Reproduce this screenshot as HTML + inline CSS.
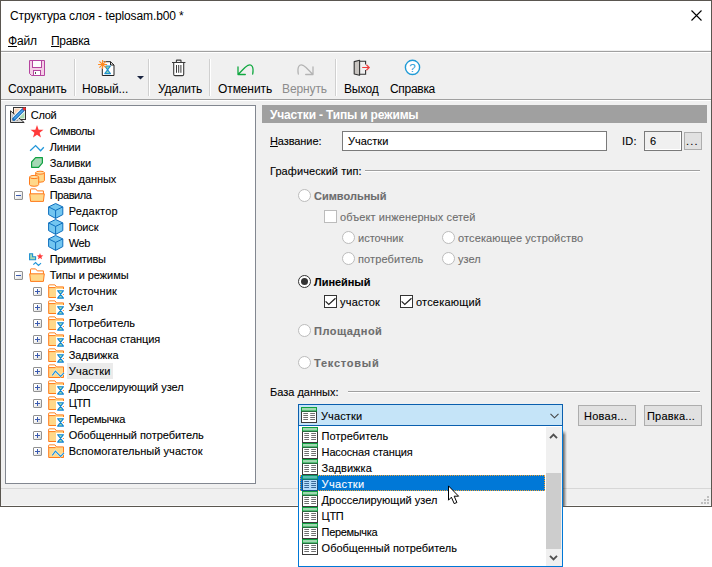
<!DOCTYPE html>
<html lang="ru">
<head>
<meta charset="utf-8">
<title>Структура слоя - teplosam.b00 *</title>
<style>
html,body{margin:0;padding:0;}
body{width:712px;height:567px;position:relative;overflow:hidden;background:#fff;font-family:"Liberation Sans",sans-serif;font-size:11px;color:#000;}
*{box-sizing:border-box;}
#win,#win div,#win svg,#win span.a{position:absolute;}
#win{left:0;top:0;width:712px;height:507px;background:#f0f0f0;}
.t{white-space:nowrap;line-height:14px;height:14px;font-size:11px;-webkit-text-stroke:0.1px currentColor;}
.ui{font-size:12px;line-height:16px;height:16px;white-space:nowrap;}
.b{font-weight:bold;}
.dis{color:#6d6d6d;}
u{text-decoration:underline;text-underline-offset:1px;}
svg{overflow:visible;}
.sep{width:1px;height:37px;top:59px;background:#d0d0d0;}
.sep:after{content:"";position:absolute;left:1px;top:0;width:1px;height:37px;background:#fff;}
.radio{width:13px;height:13px;border-radius:50%;border:1px solid #333;background:#fff;}
.radio.d{border-color:#bcbcbc;}
.radio.on:after{content:"";position:absolute;left:2px;top:2px;width:7px;height:7px;border-radius:50%;background:#333;}
.cb{width:13px;height:13px;border:1px solid #333;background:#fff;}
.cb.d{border-color:#bcbcbc;}
.btn{background:#e1e1e1;border:1px solid #adadad;}
.gl{height:1px;background:#a0a0a0;}
.ex{width:9px;height:9px;border:1px solid #919191;border-radius:1px;background:linear-gradient(135deg,#fff 30%,#d8d8d8);}
.ex:before{content:"";position:absolute;left:1px;top:3px;width:5px;height:1px;background:#3a5ab0;}
.ex.p:after{content:"";position:absolute;left:3px;top:1px;width:1px;height:5px;background:#3a5ab0;}
</style>
</head>
<body>

<div id="win">
  <!-- title bar + menu -->
  <div id="titlebar" style="left:1px;top:1px;width:710px;height:49px;background:#fff;"></div>
  <div id="title" class="ui" style="left:10px;top:8px;letter-spacing:-0.12px;">Структура слоя - teplosam.b00 *</div>
  <svg id="closex" style="left:691px;top:10px;" width="11" height="11" viewBox="0 0 11 11"><path d="M0.5 0.5 L10.5 10.5 M10.5 0.5 L0.5 10.5" stroke="#000" stroke-width="1.1" fill="none"/></svg>
  <div id="m1" class="ui" style="left:8px;top:33px;letter-spacing:-0.2px;"><u>Ф</u>айл</div>
  <div id="m2" class="ui" style="left:51px;top:33px;letter-spacing:-0.3px;"><u>П</u>равка</div>
  <div style="left:1px;top:51px;width:710px;height:1px;background:#a0a0a0;"></div>
  <div style="left:1px;top:52px;width:710px;height:1px;background:#fff;"></div>
  <!-- toolbar -->
  <div style="left:1px;top:99px;width:710px;height:1px;background:#a0a0a0;"></div>
  <div style="left:1px;top:100px;width:710px;height:1px;background:#fff;"></div>
  <div class="sep" style="left:74px;"></div>
  <div class="sep" style="left:148px;"></div>
  <div class="sep" style="left:209px;"></div>
  <div class="sep" style="left:335px;"></div>
  <div id="tb1" class="ui" style="left:8px;top:81px;letter-spacing:-0.1px;">Сохранить</div>
  <div id="tb2" class="ui" style="left:82px;top:81px;letter-spacing:-0.1px;">Новый...</div>
  <div id="tb3" class="ui" style="left:158px;top:81px;letter-spacing:-0.25px;">Удалить</div>
  <div id="tb4" class="ui" style="left:218px;top:81px;letter-spacing:-0.1px;">Отменить</div>
  <div id="tb5" class="ui" style="left:282px;top:81px;letter-spacing:-0.1px;color:#8c8c8c;">Вернуть</div>
  <div id="tb6" class="ui" style="left:344px;top:81px;letter-spacing:-0.3px;">Выход</div>
  <div id="tb7" class="ui" style="left:390px;top:81px;letter-spacing:-0.3px;">Справка</div>
  
  <svg style="left:29px;top:60px;" width="16" height="16" viewBox="0 0 16 16">
    <path d="M0.5 0.5 H15.5 V15.5 H2.5 L0.5 13.5 Z" fill="#f4cfe6" stroke="#b5449f" stroke-width="1"/>
    <rect x="3.5" y="0.5" width="9" height="7" fill="#fcfcfc" stroke="#b5449f" stroke-width="1"/>
    <rect x="4.5" y="10.5" width="7" height="5" fill="#fff" stroke="#b5449f" stroke-width="1"/>
    <rect x="6" y="12" width="1" height="2" fill="#555"/>
  </svg>
  <svg style="left:98px;top:58px;" width="18" height="19" viewBox="0 0 18 19">
    <path d="M4.3 3.7 H12.5 L16 7 V17.5 H4.3 Z" fill="#fff" stroke="#222" stroke-width="1"/>
    <path d="M12.5 3.7 V7 H16" fill="none" stroke="#222" stroke-width="1"/>
    <path d="M6.8 8 H12.4 L6.8 15.6 H12.4 Z" fill="#90d6a8" stroke="#1e90d0" stroke-width="1.2" stroke-linejoin="round"/>
    <circle cx="4.6" cy="6.5" r="3.2" fill="#f0f0f0"/>
    <path d="M4.6 2 V11 M0.1 6.5 H9.1 M1.4 3.3 L7.8 9.7 M7.8 3.3 L1.4 9.7" stroke="#ff8a20" stroke-width="1.1"/>
  </svg>
  <svg style="left:137px;top:76px;" width="7" height="4" viewBox="0 0 7 4"><path d="M0 0 H7 L3.5 3.6 Z" fill="#1a2440"/></svg>
  <svg style="left:171px;top:59px;" width="16" height="18" viewBox="0 0 16 18">
    <path d="M2.7 3.5 V15.2 Q2.7 16.6 4.1 16.6 H11.3 Q12.7 16.6 12.7 15.2 V3.5" fill="#fff" stroke="#3a3a3a" stroke-width="1.1"/>
    <path d="M1 3.5 H14.4 M5.4 3.4 V1.6 Q5.4 1.1 5.9 1.1 H9.5 Q10 1.1 10 1.6 V3.4" fill="none" stroke="#3a3a3a" stroke-width="1.1"/>
    <path d="M5.5 6 V13.8 M7.7 6 V13.8 M9.9 6 V13.8" stroke="#3a3a3a" stroke-width="1"/>
  </svg>
  <svg style="left:236.5px;top:63px;" width="18" height="13" viewBox="0 0 18 13">
    <path d="M1 4 V11.5 H8.3 M1.2 11.3 C5 8 7 4.5 11 2.3 C14.5 0.8 17 3.5 15.7 11" fill="none" stroke="#10a840" stroke-width="1.3" stroke-linecap="round" stroke-linejoin="round"/>
  </svg>
  <svg style="left:295.5px;top:63px;" width="18" height="13" viewBox="0 0 18 13">
    <path d="M17 4 V11.5 H9.7 M16.8 11.3 C13 8 11 4.5 7 2.3 C3.5 0.8 1 3.5 2.3 11" fill="none" stroke="#b4b4b4" stroke-width="1.3" stroke-linecap="round" stroke-linejoin="round"/>
  </svg>
  <svg style="left:353px;top:59px;" width="18" height="17" viewBox="0 0 18 17">
    <path d="M6.8 2.3 H12.6 V5.6 M12.6 11 V15.3 H6.8" fill="none" stroke="#333" stroke-width="1.1"/>
    <path d="M1.2 2.6 L6.6 1.3 V16.3 L1.2 15 Z" fill="#c8c4c0" stroke="#333" stroke-width="1.1" stroke-linejoin="round"/>
    <path d="M9.2 8.5 H16 M13.4 5.8 L16.2 8.5 L13.4 11.2" fill="none" stroke="#f03c3c" stroke-width="1.2"/>
  </svg>
  <svg style="left:404px;top:59px;" width="17" height="17" viewBox="0 0 17 17">
    <circle cx="8.5" cy="8.4" r="7.1" fill="#fff" stroke="#1e9ad6" stroke-width="1.4"/>
    <text x="8.5" y="12.6" text-anchor="middle" font-family="Liberation Sans, sans-serif" font-size="11.5" fill="#1e9ad6">?</text>
  </svg>

  <!-- tree panel -->
  <div id="tree" style="left:5px;top:105px;width:251px;height:379px;background:#fff;border:1px solid #828790;"></div>
  <svg style="left:10px;top:107px;" width="16" height="16" viewBox="0 0 16 16"><rect x="3.5" y="0.5" width="12" height="12" fill="#fff" stroke="#333" stroke-width="1"/><path d="M4.5 1.5 H12.5 L4.5 9.5 Z" fill="#f8d2b4"/><path d="M14.5 4 V11.5 H7 Z" fill="#a9dab3"/><path d="M0.5 3.8 V15.5 H14.2 Z" fill="#d4d4d4" fill-opacity="0.9" stroke="#333" stroke-width="1" stroke-linejoin="round"/><path d="M2.6 9 V13.4 H7.6 Z" fill="#f4f4f4" stroke="#555" stroke-width="0.6"/><path d="M3.9 12 L13.3 2.6" stroke="#fff" stroke-width="5.4" stroke-linecap="butt"/><path d="M4 12 L13.2 2.8" stroke="#1b6fc0" stroke-width="3.6" stroke-linecap="round"/><path d="M4.2 11.8 L12.8 3.2" stroke="#4fa8ea" stroke-width="1.5"/><circle cx="14.3" cy="1.8" r="1.6" fill="#f03030"/></svg>
  <div class="t tr" id="tr0" style="left:30.7px;top:108px;letter-spacing:-0.233px;">Слой</div>
  <svg style="left:29px;top:123px;" width="16" height="16" viewBox="0 0 16 16"><polygon points="8.00,2.10 9.62,6.68 14.47,6.80 10.62,9.75 12.00,14.40 8.00,11.65 4.00,14.40 5.38,9.75 1.53,6.80 6.38,6.68" fill="#ff3b3b"/></svg>
  <div class="t tr" id="tr1" style="left:49.7px;top:124px;letter-spacing:-0.400px;">Символы</div>
  <svg style="left:29px;top:139px;" width="16" height="16" viewBox="0 0 16 16"><polyline points="1.1,11.7 6.6,6.6 11.6,11.7 14.8,8.3" fill="none" stroke="#2196d9" stroke-width="1.3"/></svg>
  <div class="t tr" id="tr2" style="left:49.7px;top:140px;letter-spacing:-0.175px;">Линии</div>
  <svg style="left:29px;top:155px;" width="16" height="16" viewBox="0 0 16 16"><polygon points="2.6,7 6.6,2.7 13.4,2.7 13.4,7.8 9.6,12.3 2.6,12.3" fill="#a5d8b5" stroke="#10a040" stroke-width="1.2" stroke-linejoin="round"/></svg>
  <div class="t tr" id="tr3" style="left:49.7px;top:156px;letter-spacing:-0.117px;">Заливки</div>
  <svg style="left:29px;top:171px;" width="16" height="16" viewBox="0 0 16 16"><path d="M6.7 1.7 V9.5 A4.35 1.7 0 0 0 15.4 9.5 V1.7" fill="#ffd88a" stroke="#ff7a1a" stroke-width="1"/><ellipse cx="11.05" cy="1.7" rx="4.35" ry="1.5" fill="#ffe2a8" stroke="#ff7a1a" stroke-width="1"/><path d="M0.5 6 V13.5 A4.6 1.8 0 0 0 9.7 13.5 V6" fill="#ffd88a" stroke="#ff7a1a" stroke-width="1"/><ellipse cx="5.1" cy="6" rx="4.6" ry="1.6" fill="#ffe2a8" stroke="#ff7a1a" stroke-width="1"/></svg>
  <div class="t tr" id="tr4" style="left:49.7px;top:172px;letter-spacing:-0.070px;">Базы данных</div>
  <div class="ex" style="left:14px;top:191px;"></div>
  <svg style="left:29px;top:187px;" width="16" height="16" viewBox="0 0 16 16"><path d="M1.5 7 V2.4 Q1.5 1.9 2 1.9 H6.6 L8.3 3.9 H14.4 V7" fill="#fff" stroke="#ff7a1a" stroke-width="1"/><path d="M0.7 6.8 H15.3 L14.4 14.4 H1.6 Z" fill="#ffd88a" stroke="#ff7a1a" stroke-width="1" stroke-linejoin="round"/></svg>
  <div class="t tr" id="tr5" style="left:49.7px;top:188px;letter-spacing:-0.400px;">Правила</div>
  <svg style="left:48px;top:203px;" width="16" height="16" viewBox="0 0 16 16"><polygon points="7.6,0.5 14.8,3.9 14.8,11.6 7.6,15.4 0.6,11.6 0.6,3.9" fill="#73c6f0" stroke="#0d6ebd" stroke-width="1" stroke-linejoin="round"/><path d="M0.6 3.9 L7.6 7.4 L14.8 3.9 M7.6 7.4 V15.4" fill="none" stroke="#0d6ebd" stroke-width="1"/></svg>
  <div class="t tr" id="tr6" style="left:68.7px;top:204px;letter-spacing:0.243px;">Редактор</div>
  <svg style="left:48px;top:219px;" width="16" height="16" viewBox="0 0 16 16"><polygon points="7.6,0.5 14.8,3.9 14.8,11.6 7.6,15.4 0.6,11.6 0.6,3.9" fill="#73c6f0" stroke="#0d6ebd" stroke-width="1" stroke-linejoin="round"/><path d="M0.6 3.9 L7.6 7.4 L14.8 3.9 M7.6 7.4 V15.4" fill="none" stroke="#0d6ebd" stroke-width="1"/></svg>
  <div class="t tr" id="tr7" style="left:68.7px;top:220px;letter-spacing:-0.175px;">Поиск</div>
  <svg style="left:48px;top:235px;" width="16" height="16" viewBox="0 0 16 16"><polygon points="7.6,0.5 14.8,3.9 14.8,11.6 7.6,15.4 0.6,11.6 0.6,3.9" fill="#73c6f0" stroke="#0d6ebd" stroke-width="1" stroke-linejoin="round"/><path d="M0.6 3.9 L7.6 7.4 L14.8 3.9 M7.6 7.4 V15.4" fill="none" stroke="#0d6ebd" stroke-width="1"/></svg>
  <div class="t tr" id="tr8" style="left:68.7px;top:236px;letter-spacing:-0.350px;">Web</div>
  <svg style="left:29px;top:251px;" width="16" height="16" viewBox="0 -2.1 16 16"><path d="M0.6 0.7 H3.6 V3.6 H6.6 V6.6 H0.6 Z" fill="#a5d8b5" stroke="#1e90d0" stroke-width="1.1"/><polygon points="11.00,-0.10 11.85,2.23 14.33,2.32 12.38,3.85 13.06,6.23 11.00,4.85 8.94,6.23 9.62,3.85 7.67,2.32 10.15,2.23" fill="#ff3b3b"/><polyline points="4.3,11.6 6.6,9.4 9.5,12.4 12,10" fill="none" stroke="#2196d9" stroke-width="1.1"/></svg>
  <div class="t tr" id="tr9" style="left:49.7px;top:252px;letter-spacing:-0.338px;">Примитивы</div>
  <div class="ex" style="left:14px;top:271px;"></div>
  <svg style="left:29px;top:267px;" width="16" height="16" viewBox="0 0 16 16"><path d="M1.5 7 V2.4 Q1.5 1.9 2 1.9 H6.6 L8.3 3.9 H14.4 V7" fill="#fff" stroke="#ff7a1a" stroke-width="1"/><path d="M0.7 6.8 H15.3 L14.4 14.4 H1.6 Z" fill="#ffd88a" stroke="#ff7a1a" stroke-width="1" stroke-linejoin="round"/></svg>
  <div class="t tr" id="tr10" style="left:49.7px;top:268px;letter-spacing:-0.058px;">Типы и режимы</div>
  <div class="ex p" style="left:33px;top:287px;"></div>
  <svg style="left:48px;top:283px;" width="16" height="16" viewBox="0 0 16 16"><path d="M0.7 14.5 V2.4 Q0.7 1.9 1.2 1.9 H6.9 L8.6 3.9 H15.5 V14.5 Z" fill="#ffd88a" stroke="#ff7a1a" stroke-width="1"/><path d="M1.2 2.4 H6.7 L7.9 4.2 H1.2 Z" fill="#fff"/><path d="M0.7 4.6 H7.6" stroke="#ff7a1a" stroke-width="1"/><rect x="8" y="6" width="9" height="11" fill="#fff"/><circle cx="15.4" cy="11.5" r="0.6" fill="#ff7a1a"/><path d="M9.6 7.7 H15.5 L9.6 15.1 H15.5 Z" fill="#a8dfa4" stroke="#0f84d4" stroke-width="1.05" stroke-linejoin="round"/></svg>
  <div class="t tr" id="tr11" style="left:68.7px;top:284px;letter-spacing:0.171px;">Источник</div>
  <div class="ex p" style="left:33px;top:303px;"></div>
  <svg style="left:48px;top:299px;" width="16" height="16" viewBox="0 0 16 16"><path d="M0.7 14.5 V2.4 Q0.7 1.9 1.2 1.9 H6.9 L8.6 3.9 H15.5 V14.5 Z" fill="#ffd88a" stroke="#ff7a1a" stroke-width="1"/><path d="M1.2 2.4 H6.7 L7.9 4.2 H1.2 Z" fill="#fff"/><path d="M0.7 4.6 H7.6" stroke="#ff7a1a" stroke-width="1"/><rect x="8" y="6" width="9" height="11" fill="#fff"/><circle cx="15.4" cy="11.5" r="0.6" fill="#ff7a1a"/><path d="M9.6 7.7 H15.5 L9.6 15.1 H15.5 Z" fill="#a8dfa4" stroke="#0f84d4" stroke-width="1.05" stroke-linejoin="round"/></svg>
  <div class="t tr" id="tr12" style="left:68.7px;top:300px;letter-spacing:0.300px;">Узел</div>
  <div class="ex p" style="left:33px;top:319px;"></div>
  <svg style="left:48px;top:315px;" width="16" height="16" viewBox="0 0 16 16"><path d="M0.7 14.5 V2.4 Q0.7 1.9 1.2 1.9 H6.9 L8.6 3.9 H15.5 V14.5 Z" fill="#ffd88a" stroke="#ff7a1a" stroke-width="1"/><path d="M1.2 2.4 H6.7 L7.9 4.2 H1.2 Z" fill="#fff"/><path d="M0.7 4.6 H7.6" stroke="#ff7a1a" stroke-width="1"/><rect x="8" y="6" width="9" height="11" fill="#fff"/><circle cx="15.4" cy="11.5" r="0.6" fill="#ff7a1a"/><path d="M9.6 7.7 H15.5 L9.6 15.1 H15.5 Z" fill="#a8dfa4" stroke="#0f84d4" stroke-width="1.05" stroke-linejoin="round"/></svg>
  <div class="t tr" id="tr13" style="left:68.7px;top:316px;letter-spacing:0.020px;">Потребитель</div>
  <div class="ex p" style="left:33px;top:335px;"></div>
  <svg style="left:48px;top:331px;" width="16" height="16" viewBox="0 0 16 16"><path d="M0.7 14.5 V2.4 Q0.7 1.9 1.2 1.9 H6.9 L8.6 3.9 H15.5 V14.5 Z" fill="#ffd88a" stroke="#ff7a1a" stroke-width="1"/><path d="M1.2 2.4 H6.7 L7.9 4.2 H1.2 Z" fill="#fff"/><path d="M0.7 4.6 H7.6" stroke="#ff7a1a" stroke-width="1"/><rect x="8" y="6" width="9" height="11" fill="#fff"/><circle cx="15.4" cy="11.5" r="0.6" fill="#ff7a1a"/><path d="M9.6 7.7 H15.5 L9.6 15.1 H15.5 Z" fill="#a8dfa4" stroke="#0f84d4" stroke-width="1.05" stroke-linejoin="round"/></svg>
  <div class="t tr" id="tr14" style="left:68.7px;top:332px;letter-spacing:-0.140px;">Насосная станция</div>
  <div class="ex p" style="left:33px;top:351px;"></div>
  <svg style="left:48px;top:347px;" width="16" height="16" viewBox="0 0 16 16"><path d="M0.7 14.5 V2.4 Q0.7 1.9 1.2 1.9 H6.9 L8.6 3.9 H15.5 V14.5 Z" fill="#ffd88a" stroke="#ff7a1a" stroke-width="1"/><path d="M1.2 2.4 H6.7 L7.9 4.2 H1.2 Z" fill="#fff"/><path d="M0.7 4.6 H7.6" stroke="#ff7a1a" stroke-width="1"/><rect x="8" y="6" width="9" height="11" fill="#fff"/><circle cx="15.4" cy="11.5" r="0.6" fill="#ff7a1a"/><path d="M9.6 7.7 H15.5 L9.6 15.1 H15.5 Z" fill="#a8dfa4" stroke="#0f84d4" stroke-width="1.05" stroke-linejoin="round"/></svg>
  <div class="t tr" id="tr15" style="left:68.7px;top:348px;letter-spacing:0.043px;">Задвижка</div>
  <div style="left:67px;top:363px;width:46px;height:16px;background:#ebebeb;"></div>
  <div class="ex p" style="left:33px;top:367px;"></div>
  <svg style="left:48px;top:363px;" width="16" height="16" viewBox="0 0 16 16"><path d="M0.7 14.5 V2.4 Q0.7 1.9 1.2 1.9 H6.9 L8.6 3.9 H15.5 V14.5 Z" fill="#ffd88a" stroke="#ff7a1a" stroke-width="1"/><path d="M1.2 2.4 H6.7 L7.9 4.2 H1.2 Z" fill="#fff"/><path d="M0.7 4.6 H7.6" stroke="#ff7a1a" stroke-width="1"/><polyline points="4.3,12.4 7.4,8.1 12.6,13.3 15.9,9.9" fill="none" stroke="#fff6e0" stroke-width="2.2"/><polyline points="4.3,12.4 7.4,8.1 12.6,13.3 15.9,9.9" fill="none" stroke="#1e90d9" stroke-width="1.2"/></svg>
  <div class="t tr" id="tr16" style="left:68.7px;top:364px;letter-spacing:0.250px;">Участки</div>
  <div class="ex p" style="left:33px;top:383px;"></div>
  <svg style="left:48px;top:379px;" width="16" height="16" viewBox="0 0 16 16"><path d="M0.7 14.5 V2.4 Q0.7 1.9 1.2 1.9 H6.9 L8.6 3.9 H15.5 V14.5 Z" fill="#ffd88a" stroke="#ff7a1a" stroke-width="1"/><path d="M1.2 2.4 H6.7 L7.9 4.2 H1.2 Z" fill="#fff"/><path d="M0.7 4.6 H7.6" stroke="#ff7a1a" stroke-width="1"/><rect x="8" y="6" width="9" height="11" fill="#fff"/><circle cx="15.4" cy="11.5" r="0.6" fill="#ff7a1a"/><path d="M9.6 7.7 H15.5 L9.6 15.1 H15.5 Z" fill="#a8dfa4" stroke="#0f84d4" stroke-width="1.05" stroke-linejoin="round"/></svg>
  <div class="t tr" id="tr17" style="left:68.7px;top:380px;letter-spacing:-0.039px;">Дросселирующий узел</div>
  <div class="ex p" style="left:33px;top:399px;"></div>
  <svg style="left:48px;top:395px;" width="16" height="16" viewBox="0 0 16 16"><path d="M0.7 14.5 V2.4 Q0.7 1.9 1.2 1.9 H6.9 L8.6 3.9 H15.5 V14.5 Z" fill="#ffd88a" stroke="#ff7a1a" stroke-width="1"/><path d="M1.2 2.4 H6.7 L7.9 4.2 H1.2 Z" fill="#fff"/><path d="M0.7 4.6 H7.6" stroke="#ff7a1a" stroke-width="1"/><rect x="8" y="6" width="9" height="11" fill="#fff"/><circle cx="15.4" cy="11.5" r="0.6" fill="#ff7a1a"/><path d="M9.6 7.7 H15.5 L9.6 15.1 H15.5 Z" fill="#a8dfa4" stroke="#0f84d4" stroke-width="1.05" stroke-linejoin="round"/></svg>
  <div class="t tr" id="tr18" style="left:68.7px;top:396px;letter-spacing:-0.350px;">ЦТП</div>
  <div class="ex p" style="left:33px;top:415px;"></div>
  <svg style="left:48px;top:411px;" width="16" height="16" viewBox="0 0 16 16"><path d="M0.7 14.5 V2.4 Q0.7 1.9 1.2 1.9 H6.9 L8.6 3.9 H15.5 V14.5 Z" fill="#ffd88a" stroke="#ff7a1a" stroke-width="1"/><path d="M1.2 2.4 H6.7 L7.9 4.2 H1.2 Z" fill="#fff"/><path d="M0.7 4.6 H7.6" stroke="#ff7a1a" stroke-width="1"/><rect x="8" y="6" width="9" height="11" fill="#fff"/><circle cx="15.4" cy="11.5" r="0.6" fill="#ff7a1a"/><path d="M9.6 7.7 H15.5 L9.6 15.1 H15.5 Z" fill="#a8dfa4" stroke="#0f84d4" stroke-width="1.05" stroke-linejoin="round"/></svg>
  <div class="t tr" id="tr19" style="left:68.7px;top:412px;letter-spacing:-0.250px;">Перемычка</div>
  <div class="ex p" style="left:33px;top:431px;"></div>
  <svg style="left:48px;top:427px;" width="16" height="16" viewBox="0 0 16 16"><path d="M0.7 14.5 V2.4 Q0.7 1.9 1.2 1.9 H6.9 L8.6 3.9 H15.5 V14.5 Z" fill="#ffd88a" stroke="#ff7a1a" stroke-width="1"/><path d="M1.2 2.4 H6.7 L7.9 4.2 H1.2 Z" fill="#fff"/><path d="M0.7 4.6 H7.6" stroke="#ff7a1a" stroke-width="1"/><rect x="8" y="6" width="9" height="11" fill="#fff"/><circle cx="15.4" cy="11.5" r="0.6" fill="#ff7a1a"/><path d="M9.6 7.7 H15.5 L9.6 15.1 H15.5 Z" fill="#a8dfa4" stroke="#0f84d4" stroke-width="1.05" stroke-linejoin="round"/></svg>
  <div class="t tr" id="tr20" style="left:68.7px;top:428px;letter-spacing:-0.033px;">Обобщенный потребитель</div>
  <div class="ex p" style="left:33px;top:447px;"></div>
  <svg style="left:48px;top:443px;" width="16" height="16" viewBox="0 0 16 16"><path d="M0.7 14.5 V2.4 Q0.7 1.9 1.2 1.9 H6.9 L8.6 3.9 H15.5 V14.5 Z" fill="#ffd88a" stroke="#ff7a1a" stroke-width="1"/><path d="M1.2 2.4 H6.7 L7.9 4.2 H1.2 Z" fill="#fff"/><path d="M0.7 4.6 H7.6" stroke="#ff7a1a" stroke-width="1"/><polyline points="4.3,12.4 7.4,8.1 12.6,13.3 15.9,9.9" fill="none" stroke="#fff6e0" stroke-width="2.2"/><polyline points="4.3,12.4 7.4,8.1 12.6,13.3 15.9,9.9" fill="none" stroke="#1e90d9" stroke-width="1.2"/></svg>
  <div class="t tr" id="tr21" style="left:68.7px;top:444px;letter-spacing:0.041px;">Вспомогательный участок</div>
  <!-- right panel -->
  <div id="hdr" style="left:262px;top:105px;width:445px;height:18px;background:#a0a0a0;"></div>
  <div id="hdrt" class="b" style="left:270px;top:107px;letter-spacing:-0.17px;font-size:12px;line-height:16px;color:#fff;white-space:nowrap;">Участки - Типы и режимы</div>
  <div class="t " style="left:270px;top:134px;letter-spacing:-0.09px;" id="l-name"><u>Н</u>азвание:</div>
  <div style="left:342px;top:131px;width:265px;height:20px;background:#fff;border:1px solid #7a7a7a;"></div>
  <div class="t " style="left:348px;top:134px;" id="v-name">Участки</div>
  <div class="t " style="left:622px;top:134px;letter-spacing:0.2px;" id="l-id">ID:</div>
  <div style="left:644px;top:131px;width:38px;height:20px;background:#f0f0f0;border:1px solid #7a7a7a;box-shadow:inset -1px -1px 0 #fff;"></div>
  <div class="t " style="left:650px;top:134px;" id="v-id">6</div>
  <div class="btn" style="left:684px;top:132px;width:18px;height:18px;"></div>
  <div class="t " style="left:686px;top:134px;letter-spacing:1.2px;" id="b-dots">...</div>
  <div class="t " style="left:270px;top:164px;letter-spacing:0.08px;" id="l-gt">Графический тип:</div>
  <div class="gl" style="left:365px;top:170px;width:335px;"></div><div class="gl" style="left:365px;top:171px;width:335px;background:#fff;"></div>
  <div class="radio d" style="left:298px;top:189px;"></div>
  <div class="t b dis" style="left:314px;top:189px;" id="r1">Символьный</div>
  <div class="cb d" style="left:324px;top:210px;"></div>
  <div class="t dis" style="left:340px;top:210px;letter-spacing:0.11px;" id="c1">объект инженерных сетей</div>
  <div class="radio d" style="left:342px;top:231px;"></div>
  <div class="t dis" style="left:358px;top:231px;" id="r1a">источник</div>
  <div class="radio d" style="left:442px;top:231px;"></div>
  <div class="t dis" style="left:458px;top:231px;letter-spacing:0.12px;" id="r1b">отсекающее устройство</div>
  <div class="radio d" style="left:342px;top:252px;"></div>
  <div class="t dis" style="left:358px;top:252px;letter-spacing:0.1px;" id="r1c">потребитель</div>
  <div class="radio d" style="left:442px;top:252px;"></div>
  <div class="t dis" style="left:458px;top:252px;" id="r1d">узел</div>
  <div class="radio on" style="left:298px;top:275px;"></div>
  <div class="t b" style="left:314px;top:275px;letter-spacing:-0.05px;" id="r2">Линейный</div>
  <div class="cb " style="left:324px;top:295px;"><svg style="left:1px;top:1px;" width="9" height="9" viewBox="0 0 9 9"><path d="M-0.4 4.3 L2.8 7.5 L9.5 1.2" fill="none" stroke="#222" stroke-width="1.2"/></svg></div>
  <div class="t " style="left:340px;top:295px;letter-spacing:0.2px;" id="c2a">участок</div>
  <div class="cb " style="left:400px;top:295px;"><svg style="left:1px;top:1px;" width="9" height="9" viewBox="0 0 9 9"><path d="M-0.4 4.3 L2.8 7.5 L9.5 1.2" fill="none" stroke="#222" stroke-width="1.2"/></svg></div>
  <div class="t " style="left:416px;top:295px;letter-spacing:0.19px;" id="c2b">отсекающий</div>
  <div class="radio d" style="left:298px;top:324px;"></div>
  <div class="t b dis" style="left:314px;top:324px;letter-spacing:0.47px;" id="r3">Площадной</div>
  <div class="radio d" style="left:298px;top:356px;"></div>
  <div class="t b dis" style="left:314px;top:356px;letter-spacing:0.75px;" id="r4">Текстовый</div>
  <div class="t " style="left:270px;top:385px;" id="l-db">База данных:</div>
  <div class="gl" style="left:348px;top:391px;width:352px;"></div><div class="gl" style="left:348px;top:392px;width:352px;background:#fff;"></div>
  <div style="left:298px;top:404px;width:265px;height:22px;background:#c5e4f8;border:1px solid #0a5fae;"></div>
  <svg style="left:301px;top:407px;" width="16" height="16" viewBox="0 0 16 16"><rect x="0.5" y="4.5" width="15" height="11" fill="#fff" stroke="#3a3a3a" stroke-width="1"/><rect x="0.5" y="0.5" width="15" height="3.5" fill="#a0d8b0" stroke="#10a040" stroke-width="1"/><path d="M2.3 6.5 H7 M2.3 8.5 H7 M2.3 10.5 H7 M2.3 12.5 H7 M9.2 6.5 H14 M9.2 8.5 H14 M9.2 10.5 H14 M9.2 12.5 H14" stroke="#707070" stroke-width="1"/></svg>
  <div class="t " style="left:321px;top:409px;letter-spacing:0.12px;" id="cmb">Участки</div>
  <svg style="left:550px;top:413px;" width="9" height="6" viewBox="0 0 9 6"><path d="M0.5 0.8 L4.5 4.8 L8.5 0.8" fill="none" stroke="#444" stroke-width="1.1"/></svg>
  <div class="btn" style="left:578px;top:405px;width:58px;height:21px;"></div>
  <div class="t " style="left:584px;top:409px;letter-spacing:0.28px;" id="b-new">Новая...</div>
  <div class="btn" style="left:644px;top:405px;width:58px;height:21px;"></div>
  <div class="t " style="left:647px;top:409px;letter-spacing:0.2px;" id="b-edit">Правка...</div>
  <!-- status bar -->
  <div style="left:1px;top:488px;width:710px;height:1px;background:#d7d7d7;"></div>
  <div style="left:1px;top:505px;width:710px;height:1px;background:#fafafa;"></div>
  <div style="left:707px;top:496px;width:2px;height:2px;background:#bfbfbf;"></div><div style="left:704px;top:499px;width:2px;height:2px;background:#bfbfbf;"></div><div style="left:707px;top:499px;width:2px;height:2px;background:#bfbfbf;"></div><div style="left:701px;top:502px;width:2px;height:2px;background:#bfbfbf;"></div><div style="left:704px;top:502px;width:2px;height:2px;background:#bfbfbf;"></div><div style="left:707px;top:502px;width:2px;height:2px;background:#bfbfbf;"></div>
  <!-- window border -->
  <div style="left:0;top:0;width:712px;height:1px;background:#5a5650;"></div>
  <div style="left:0;top:506px;width:712px;height:1px;background:#5a5650;"></div>
  <div style="left:0;top:0;width:1px;height:507px;background:#5a5650;"></div>
  <div style="left:711px;top:0;width:1px;height:507px;background:#5a5650;"></div>
  <div style="left:298px;top:426px;width:265px;height:141px;background:#fff;border:1px solid #0078d7;border-top:none;"></div>
  <div style="left:563px;top:430px;width:4px;height:76px;background:linear-gradient(to right,rgba(0,0,0,0.6),rgba(0,0,0,0.28) 50%,rgba(0,0,0,0));-webkit-mask-image:linear-gradient(to bottom,transparent,#000 5px);mask-image:linear-gradient(to bottom,transparent,#000 5px);"></div>
  <div style="left:546px;top:427px;width:16px;height:139px;background:#f0f0f0;"></div>
  <div style="left:546px;top:473px;width:15px;height:76px;background:#cdcdcd;"></div>
  <svg style="left:549px;top:433px;" width="9" height="6" viewBox="0 0 9 6"><path d="M1 5.2 L4.5 1.7 L8 5.2" fill="none" stroke="#505050" stroke-width="1.9"/></svg>
  <svg style="left:549px;top:555px;" width="9" height="6" viewBox="0 0 9 6"><path d="M1 0.8 L4.5 4.3 L8 0.8" fill="none" stroke="#505050" stroke-width="1.9"/></svg>
  <svg style="left:302px;top:427px;" width="16" height="16" viewBox="0 0 16 16"><rect x="0.5" y="4.5" width="15" height="11" fill="#fff" stroke="#3a3a3a" stroke-width="1"/><rect x="0.5" y="0.5" width="15" height="3.5" fill="#a0d8b0" stroke="#10a040" stroke-width="1"/><path d="M2.3 6.5 H7 M2.3 8.5 H7 M2.3 10.5 H7 M2.3 12.5 H7 M9.2 6.5 H14 M9.2 8.5 H14 M9.2 10.5 H14 M9.2 12.5 H14" stroke="#707070" stroke-width="1"/></svg>
  <div class="t dd" id="dd0" style="left:321.6px;top:429px;letter-spacing:0.040px;">Потребитель</div>
  <svg style="left:302px;top:443px;" width="16" height="16" viewBox="0 0 16 16"><rect x="0.5" y="4.5" width="15" height="11" fill="#fff" stroke="#3a3a3a" stroke-width="1"/><rect x="0.5" y="0.5" width="15" height="3.5" fill="#a0d8b0" stroke="#10a040" stroke-width="1"/><path d="M2.3 6.5 H7 M2.3 8.5 H7 M2.3 10.5 H7 M2.3 12.5 H7 M9.2 6.5 H14 M9.2 8.5 H14 M9.2 10.5 H14 M9.2 12.5 H14" stroke="#707070" stroke-width="1"/></svg>
  <div class="t dd" id="dd1" style="left:321.6px;top:445px;letter-spacing:-0.160px;">Насосная станция</div>
  <svg style="left:302px;top:459px;" width="16" height="16" viewBox="0 0 16 16"><rect x="0.5" y="4.5" width="15" height="11" fill="#fff" stroke="#3a3a3a" stroke-width="1"/><rect x="0.5" y="0.5" width="15" height="3.5" fill="#a0d8b0" stroke="#10a040" stroke-width="1"/><path d="M2.3 6.5 H7 M2.3 8.5 H7 M2.3 10.5 H7 M2.3 12.5 H7 M9.2 6.5 H14 M9.2 8.5 H14 M9.2 10.5 H14 M9.2 12.5 H14" stroke="#707070" stroke-width="1"/></svg>
  <div class="t dd" id="dd2" style="left:321.6px;top:461px;letter-spacing:0.071px;">Задвижка</div>
  <div style="left:300px;top:475px;width:245px;height:16px;background:#0078d7;outline:1px dotted #f0a030;outline-offset:-1px;"></div>
  <svg style="left:302px;top:475px;" width="16" height="16" viewBox="0 0 16 16"><rect x="0.5" y="4.5" width="15" height="11" fill="#b4dcfa" stroke="#1c4f80" stroke-width="1"/><rect x="0.5" y="0.5" width="15" height="3.5" fill="#5cbcb4" stroke="#0a9a6a" stroke-width="1"/><path d="M2.3 6.5 H7 M2.3 8.5 H7 M2.3 10.5 H7 M2.3 12.5 H7 M9.2 6.5 H14 M9.2 8.5 H14 M9.2 10.5 H14 M9.2 12.5 H14" stroke="#3a6a98" stroke-width="1"/></svg>
  <div class="t dd" id="dd3" style="left:321.6px;top:477px;letter-spacing:0.367px;color:#fff;">Участки</div>
  <svg style="left:302px;top:491px;" width="16" height="16" viewBox="0 0 16 16"><rect x="0.5" y="4.5" width="15" height="11" fill="#fff" stroke="#3a3a3a" stroke-width="1"/><rect x="0.5" y="0.5" width="15" height="3.5" fill="#a0d8b0" stroke="#10a040" stroke-width="1"/><path d="M2.3 6.5 H7 M2.3 8.5 H7 M2.3 10.5 H7 M2.3 12.5 H7 M9.2 6.5 H14 M9.2 8.5 H14 M9.2 10.5 H14 M9.2 12.5 H14" stroke="#707070" stroke-width="1"/></svg>
  <div class="t dd" id="dd4" style="left:321.6px;top:493px;">Дросселирующий узел</div>
  <svg style="left:302px;top:507px;" width="16" height="16" viewBox="0 0 16 16"><rect x="0.5" y="4.5" width="15" height="11" fill="#fff" stroke="#3a3a3a" stroke-width="1"/><rect x="0.5" y="0.5" width="15" height="3.5" fill="#a0d8b0" stroke="#10a040" stroke-width="1"/><path d="M2.3 6.5 H7 M2.3 8.5 H7 M2.3 10.5 H7 M2.3 12.5 H7 M9.2 6.5 H14 M9.2 8.5 H14 M9.2 10.5 H14 M9.2 12.5 H14" stroke="#707070" stroke-width="1"/></svg>
  <div class="t dd" id="dd5" style="left:321.6px;top:509px;letter-spacing:-0.300px;">ЦТП</div>
  <svg style="left:302px;top:523px;" width="16" height="16" viewBox="0 0 16 16"><rect x="0.5" y="4.5" width="15" height="11" fill="#fff" stroke="#3a3a3a" stroke-width="1"/><rect x="0.5" y="0.5" width="15" height="3.5" fill="#a0d8b0" stroke="#10a040" stroke-width="1"/><path d="M2.3 6.5 H7 M2.3 8.5 H7 M2.3 10.5 H7 M2.3 12.5 H7 M9.2 6.5 H14 M9.2 8.5 H14 M9.2 10.5 H14 M9.2 12.5 H14" stroke="#707070" stroke-width="1"/></svg>
  <div class="t dd" id="dd6" style="left:321.6px;top:525px;letter-spacing:-0.325px;">Перемычка</div>
  <svg style="left:302px;top:539px;" width="16" height="16" viewBox="0 0 16 16"><rect x="0.5" y="4.5" width="15" height="11" fill="#fff" stroke="#3a3a3a" stroke-width="1"/><rect x="0.5" y="0.5" width="15" height="3.5" fill="#a0d8b0" stroke="#10a040" stroke-width="1"/><path d="M2.3 6.5 H7 M2.3 8.5 H7 M2.3 10.5 H7 M2.3 12.5 H7 M9.2 6.5 H14 M9.2 8.5 H14 M9.2 10.5 H14 M9.2 12.5 H14" stroke="#707070" stroke-width="1"/></svg>
  <div class="t dd" id="dd7" style="left:321.6px;top:541px;letter-spacing:-0.024px;">Обобщенный потребитель</div>
  <svg style="left:448px;top:485px;" width="12" height="19" viewBox="0 0 12 19"><path d="M0.5 0.9 V15.2 L3.4 12.2 L6.2 18.6 L8.9 17.5 L6.2 11.2 H10.6 Z" fill="#fff" stroke="#000" stroke-width="1" stroke-linejoin="miter"/></svg>
</div>
</body>
</html>
